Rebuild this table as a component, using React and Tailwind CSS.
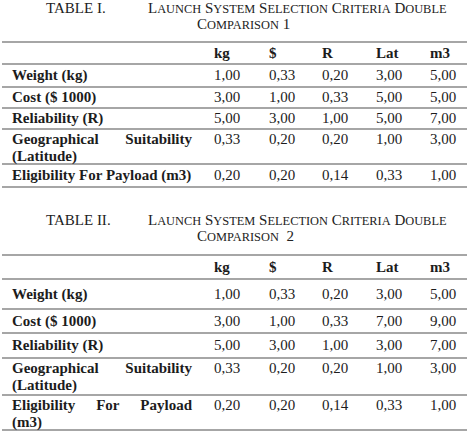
import React from "react";

const cols = ["kg", "$", "R", "Lat", "m3"];

const table1 = [
  { label: "Weight (kg)", values: ["1,00", "0,33", "0,20", "3,00", "5,00"], row: "h-[23px] items-center" },
  { label: "Cost ($ 1000)", values: ["3,00", "1,00", "0,33", "5,00", "5,00"], row: "h-[21px] items-center" },
  { label: "Reliability (R)", values: ["5,00", "3,00", "1,00", "5,00", "7,00"], row: "h-[21px] items-center" },
  { label: ["Geographical", "Suitability"], second: "(Latitude)", values: ["0,33", "0,20", "0,20", "1,00", "3,00"], row: "h-[35px] items-start pt-[1px]" },
  { label: "Eligibility For Payload (m3)", values: ["0,20", "0,20", "0,14", "0,33", "1,00"], row: "h-[23px] items-center" },
];

const table2 = [
  { label: "Weight (kg)", values: ["1,00", "0,33", "0,20", "3,00", "5,00"], row: "h-[30px] items-center" },
  { label: "Cost ($ 1000)", values: ["3,00", "1,00", "0,33", "7,00", "9,00"], row: "h-[24px] items-center" },
  { label: "Reliability (R)", values: ["5,00", "3,00", "1,00", "3,00", "7,00"], row: "h-[25px] items-center" },
  { label: ["Geographical", "Suitability"], second: "(Latitude)", values: ["0,33", "0,20", "0,20", "1,00", "3,00"], row: "h-[37px] items-start pt-[1px]" },
  { label: ["Eligibility", "For", "Payload"], second: "(m3)", values: ["0,20", "0,20", "0,14", "0,33", "1,00"], row: "h-[35px] items-start pt-[1px]" },
];

const valueCells = ["w-[55px] pl-[10px]", "w-[53px] pl-[10px]", "w-[54px] pl-[10px]", "w-[54px] pl-[10px]", "w-[47px] pl-[10px]"];

// small caps done by hand: first letter full size, rest upper-cased a size down
const Caps = ({ text }) => (
  <>
    {text.split(" ").map((w, i) => (
      <React.Fragment key={i}>
        {i > 0 && " "}
        {w[0]}
        <span className="text-[12.4px] leading-none uppercase">{w.slice(1)}</span>
      </React.Fragment>
    ))}
  </>
);

const Caption = ({ num, last }) => (
  <div className="leading-[16px] text-[15px] text-[#222]">
    <div className="flex h-[16px] pl-[46px]">
      <span className="w-[102px]">TABLE {num}.</span>
      <span>
        <Caps text="Launch System Selection Criteria Double" />
      </span>
    </div>
    <div className="h-[16px] pl-[197px] whitespace-pre">
      <Caps text="Comparison" />
      {last}
    </div>
  </div>
);

const Label = ({ item }) => {
  if (Array.isArray(item.label)) {
    return (
      <div className="leading-[17px]">
        <div className="flex justify-between">
          {item.label.map((w) => (
            <span key={w}>{w}</span>
          ))}
        </div>
        <div>{item.second}</div>
      </div>
    );
  }
  return <span className="whitespace-nowrap">{item.label}</span>;
};

const Table = ({ rows, head }) => (
  <div className="ml-[2px] w-[465px] border-t-2 border-[#a6a6a6] text-[15px] text-[#1c1c1c]">
    <div className={"flex items-center border-b-2 border-[#a6a6a6] font-bold " + head}>
      <div className="w-[202px]" />
      {cols.map((c, i) => (
        <div key={c} className={valueCells[i]}>
          {c}
        </div>
      ))}
    </div>
    {rows.map((r, idx) => (
      <div key={idx} className={"flex border-b-2 border-[#a6a6a6] " + r.row}>
        <div className="w-[202px] pl-[10px] pr-[12px] font-bold">
          <Label item={r} />
        </div>
        {r.values.map((v, i) => (
          <div key={i} className={valueCells[i] + " leading-[17px]"}>
            {v}
          </div>
        ))}
      </div>
    ))}
  </div>
);

export default function App() {
  return (
    <div className="w-[474px] h-[432px] overflow-hidden bg-white font-['Liberation_Serif',serif]">
      <Caption num="I" last=" 1" />
      <div className="mt-[9px]">
        <Table rows={table1} head="h-[22px]" />
      </div>
      <div className="mt-[24px]">
        <Caption num="II" last="  2" />
      </div>
      <div className="mt-[10px]">
        <Table rows={table2} head="h-[24px]" />
      </div>
    </div>
  );
}
